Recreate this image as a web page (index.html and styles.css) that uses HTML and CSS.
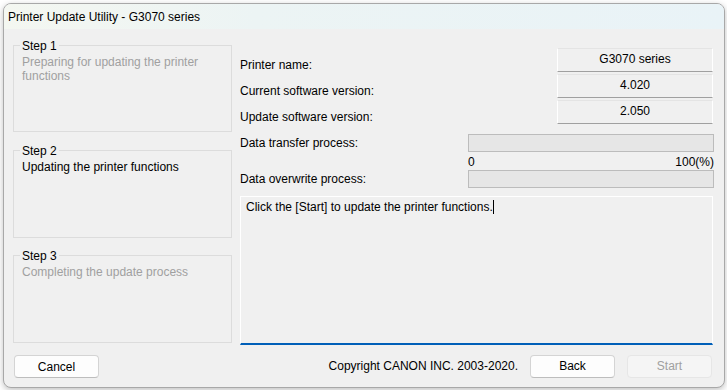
FILE: index.html
```html
<!DOCTYPE html>
<html lang="en">
<head>
  <meta charset="UTF-8">
  <title>Printer Update Utility - G3070 series</title>
  <link rel="stylesheet" href="styles.css">
</head>
<body>

  <div class="window">
    <!-- Title bar -->
    <div class="title-bar">Printer Update Utility - G3070 series</div>

    <div class="content">
      <!-- Steps column -->
      <div class="steps">
        <div class="group">
          <span class="group-title">Step 1</span>
          <p class="group-text muted">Preparing for updating the printer functions</p>
        </div>
        <div class="group">
          <span class="group-title">Step 2</span>
          <p class="group-text">Updating the printer functions</p>
        </div>
        <div class="group">
          <span class="group-title">Step 3</span>
          <p class="group-text muted">Completing the update process</p>
        </div>
      </div>

      <!-- Details column -->
      <div class="details">
        <div class="info-row">
          <span class="label">Printer name:</span>
          <span class="value">G3070 series</span>
        </div>
        <div class="info-row">
          <span class="label">Current software version:</span>
          <span class="value">4.020</span>
        </div>
        <div class="info-row">
          <span class="label">Update software version:</span>
          <span class="value">2.050</span>
        </div>

        <div class="progress-row first">
          <span class="label">Data transfer process:</span>
          <div class="bar"></div>
        </div>
        <div class="scale">
          <span>0</span>
          <span>100(%)</span>
        </div>
        <div class="progress-row">
          <span class="label">Data overwrite process:</span>
          <div class="bar"></div>
        </div>

        <div class="message">Click the [Start] to update the printer functions.<span class="caret"></span></div>
      </div>

      <!-- Footer -->
      <div class="footer-left">
        <button class="btn">Cancel</button>
      </div>
      <div class="footer-right">
        <span class="copyright">Copyright CANON INC. 2003-2020.</span>
        <button class="btn">Back</button>
        <button class="btn" disabled>Start</button>
      </div>
    </div>
  </div>

</body>
</html>
```

FILE: styles.css
```css
/* General styles */
body {
  margin: 0;
  padding: 3px;
  background-color: #ffffff;
  font-family: "Liberation Sans", Arial, sans-serif;
  font-size: 12px;
  color: #000000;
}

.window {
  width: 722px;
  height: 385px;
  box-sizing: border-box;
  border: 1px solid #a8a8a8;
  border-radius: 8px;
  background-color: #f0f0f0;
  box-shadow: 0px 2px 6px rgba(0, 0, 0, 0.25);
  overflow: hidden;
}

.title-bar {
  height: 25px;
  line-height: 26px;
  padding-left: 4px;
  background: linear-gradient(90deg, #f4f7f1 0%, #ecf4f4 35%, #e9f3f7 100%);
}

/* Main grid: steps on the left, details on the right */
.content {
  display: grid;
  grid-template-columns: 219px 474px;
  column-gap: 8px;
  row-gap: 9px;
  padding: 16px 10px 0 9px;
}

.steps {
  display: flex;
  flex-direction: column;
  gap: 18px;
}

.group {
  height: 88px;
  box-sizing: border-box;
  border: 1px solid #dcdcdc;
  padding: 0 8px;
}

.group:first-child {
  height: 87px;
}

.group + .group + .group {
  margin-top: -1px;
}

.group-title {
  display: block;
  width: max-content;
  margin: -7px 0 0 -2px;
  padding: 0 2px;
  line-height: 14px;
  background-color: #f0f0f0;
}

.group-text {
  margin: 2px 0 0 0;
  line-height: 14px;
}

.muted {
  color: #a0a0a0;
}

/* Details column */
.details {
  display: flex;
  flex-direction: column;
  padding-top: 3px;
}

.info-row {
  display: flex;
  justify-content: space-between;
  align-items: flex-end;
  margin-bottom: 2px;
}

.label {
  line-height: 14px;
}

.value {
  width: 156px;
  height: 24px;
  line-height: 21px;
  box-sizing: border-box;
  text-align: center;
  border: 1px solid #ffffff;
  border-top-color: #e4e4e4;
  border-bottom-color: #a0a0a0;
  margin-right: 1px;
}

.progress-row {
  display: grid;
  grid-template-columns: 228px 1fr;
  align-items: center;
}

.progress-row.first {
  margin-top: 8px;
}

.bar {
  height: 18px;
  box-sizing: border-box;
  border: 1px solid #bcbcbc;
  background-color: #e6e6e6;
}

.scale {
  display: flex;
  justify-content: space-between;
  margin: 3px 0 1px 228px;
  line-height: 14px;
}

.message {
  height: 149px;
  box-sizing: border-box;
  margin: 8px 1px 0 0;
  padding: 3px 5px;
  line-height: 14px;
  border: 1px solid #ffffff;
  border-bottom: 2px solid #005fb8;
}

.caret {
  display: inline-block;
  width: 1px;
  height: 14px;
  background-color: #000000;
  vertical-align: top;
}

/* Footer */
.footer-left {
  padding-left: 1px;
  padding-top: 1px;
}

.footer-right {
  display: flex;
  justify-content: flex-end;
  align-items: center;
  gap: 12px;
  padding-right: 2px;
}

.copyright {
  line-height: 14px;
}

.btn {
  width: 85px;
  height: 23px;
  padding: 0;
  font-family: inherit;
  font-size: 12px;
  color: #000000;
  background-color: #fdfdfd;
  border: 1px solid #d4d4d4;
  border-bottom-color: #bdbdbd;
  border-radius: 4px;
}

.btn:disabled {
  color: #a0a0a0;
  background-color: #f5f5f5;
  border-color: #e6e6e6;
}
```
